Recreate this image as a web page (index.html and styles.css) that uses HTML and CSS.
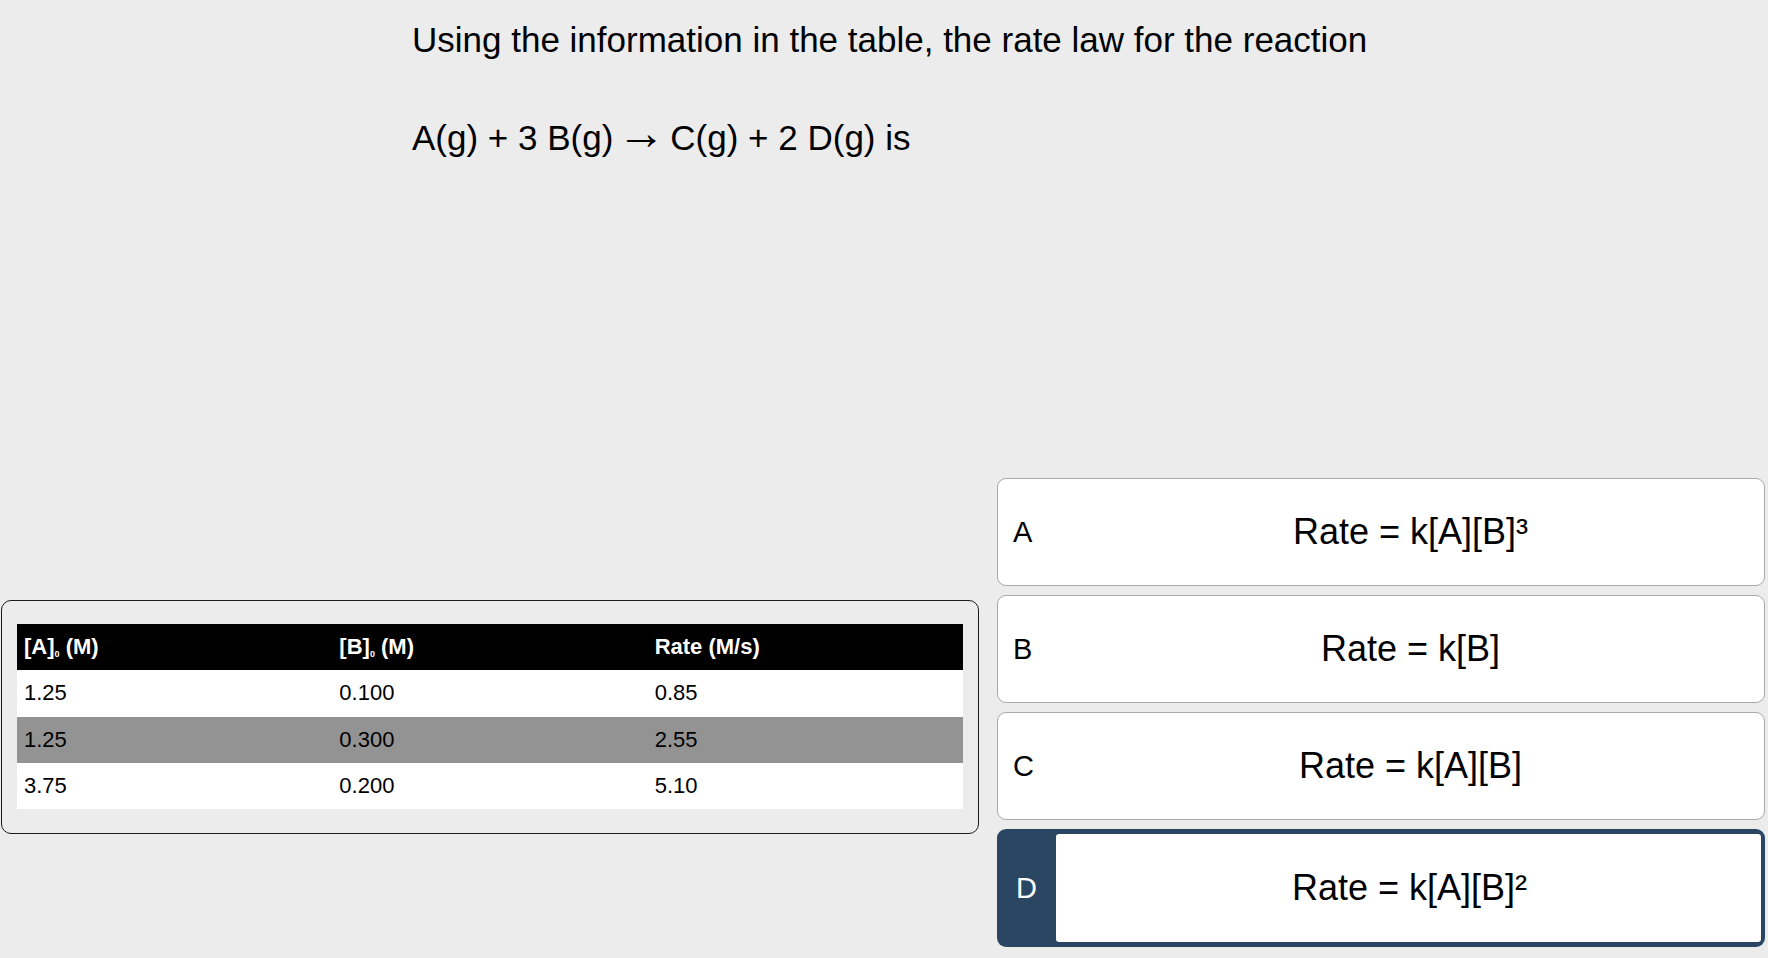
FILE: index.html
```html
<!DOCTYPE html>
<html lang="en">
<head>
<meta charset="utf-8">
<title>Rate law question</title>
<link rel="stylesheet" href="styles.css">
</head>
<body>
<div class="page">
  <div class="question">
    <p class="q-line first">Using the information in the table, the rate law for the reaction</p>
    <p class="q-line second">A(g) + 3 B(g)<span class="arrow"> → </span>C(g) + 2 D(g) is</p>
  </div>
  <div class="answers">
    <div class="data-panel">
      <table class="data">
        <thead>
          <tr>
            <th>[A]<sub>0</sub> (M)</th>
            <th>[B]<sub>0</sub> (M)</th>
            <th>Rate (M/s)</th>
          </tr>
        </thead>
        <tbody>
          <tr><td>1.25</td><td>0.100</td><td>0.85</td></tr>
          <tr class="shade"><td>1.25</td><td>0.300</td><td>2.55</td></tr>
          <tr><td>3.75</td><td>0.200</td><td>5.10</td></tr>
        </tbody>
      </table>
    </div>
    <div class="options">
      <div class="option"><div class="letter">A</div><div class="choice">Rate = k[A][B]³</div></div>
      <div class="option"><div class="letter">B</div><div class="choice">Rate = k[B]</div></div>
      <div class="option"><div class="letter">C</div><div class="choice">Rate = k[A][B]</div></div>
      <div class="option selected"><div class="letter">D</div><div class="choice">Rate = k[A][B]²</div></div>
    </div>
  </div>
</div>
</body>
</html>
```
FILE: styles.css
```css
html, body {
  margin: 0;
  padding: 0;
  background: #ececec;
}

body {
  font-family: "Liberation Sans", Arial, Helvetica, sans-serif;
  color: #000;
}

.page {
  height: 958px;
  display: flex;
  flex-direction: column;
}

.question {
  padding-left: 412px;
}

.q-line {
  margin: 0;
  font-size: 35px;
  line-height: 41px;
}

.q-line.first {
  margin-top: 19px;
}

.q-line.second {
  margin-top: 57px;
}

.arrow {
  display: inline-block;
  width: 57px;
  white-space: pre;
  word-spacing: -13.3px;
  text-indent: 4px;
  font-size: 48px;
  line-height: 0;
  vertical-align: 1px;
}

.answers {
  margin-top: auto;
  padding: 0 3px 11px 1px;
  display: flex;
  align-items: flex-start;
  gap: 18px;
}

.data-panel {
  width: 978px;
  box-sizing: border-box;
  margin-top: 122px;
  border: 1px solid #1a1a1a;
  border-radius: 10px;
  padding: 23px 15px 24px;
}

.data {
  width: 100%;
  border-collapse: collapse;
  table-layout: fixed;
  font-size: 22px;
}

.data th,
.data td {
  text-align: left;
  padding: 10px 7px;
  line-height: 26.3px;
  height: 26.3px;
}

.data th {
  background: #000;
  color: #fff;
  font-weight: bold;
}

.data th sub {
  font-size: 9px;
  vertical-align: -3px;
  line-height: 0;
}

.data td {
  background: #fff;
}

.data tr.shade td {
  background: #939393;
}

.options {
  width: 768px;
  display: flex;
  flex-direction: column;
  gap: 9px;
}

.option {
  height: 108px;
  box-sizing: border-box;
  display: flex;
  align-items: stretch;
  background: #fff;
  border: 1px solid #a9a9ae;
  border-radius: 9px;
}

.letter {
  width: 57px;
  box-sizing: border-box;
  padding-left: 15px;
  display: flex;
  align-items: center;
  font-size: 29px;
}

.choice {
  flex: 1;
  display: flex;
  align-items: center;
  justify-content: center;
  font-size: 36px;
  padding-left: 2px;
}

.option.selected {
  height: 118px;
  border: none;
  background: #2b4663;
  padding: 5px 4px 5px 0;
  border-radius: 9px;
}

.option.selected .letter {
  width: 59px;
  padding-left: 0;
  justify-content: center;
  color: #fff;
}

.option.selected .choice {
  background: #fff;
  border-radius: 3px;
}
```
